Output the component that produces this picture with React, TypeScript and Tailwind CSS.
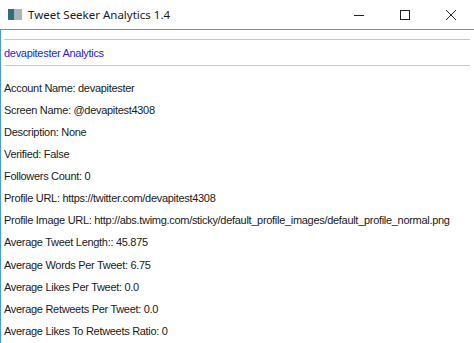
import React from "react";

const rows = [
  "Account Name: devapitester",
  "Screen Name: @devapitest4308",
  "Description: None",
  "Verified: False",
  "Followers Count: 0",
  "Profile URL: https://twitter.com/devapitest4308",
  "Profile Image URL: http://abs.twimg.com/sticky/default_profile_images/default_profile_normal.png",
  "Average Tweet Length:: 45.875",
  "Average Words Per Tweet: 6.75",
  "Average Likes Per Tweet: 0.0",
  "Average Retweets Per Tweet: 0.0",
  "Average Likes To Retweets Ratio: 0",
];

export default function App() {
  return (
    <div className="w-[474px] h-[343px] bg-white overflow-hidden flex flex-col">
      <div className="h-[29px] flex items-center shrink-0" style={{ fontFamily: '"Noto Sans", sans-serif' }}>
        <div className="ml-[8px] w-[14px] h-[11px] bg-[#a9b4bb] flex">
          <div className="w-[6px] h-full bg-[#2f6f76]" />
        </div>
        <span className="ml-[6px] text-[11.5px] text-[#1a1a1a]">Tweet Seeker Analytics 1.4</span>
        <div className="ml-auto flex items-center h-full">
          <div className="w-[46px] h-full flex items-center justify-center">
            <svg width="10" height="10" viewBox="0 0 10 10"><path d="M0 5.5H10" stroke="#222" strokeWidth="1" /></svg>
          </div>
          <div className="w-[46px] h-full flex items-center justify-center">
            <svg width="10" height="10" viewBox="0 0 10 10"><rect x="0.5" y="0.5" width="9" height="9" fill="none" stroke="#222" strokeWidth="1" /></svg>
          </div>
          <div className="w-[46px] h-full flex items-center justify-center">
            <svg width="10" height="10" viewBox="0 0 10 10"><path d="M0 0L10 10M10 0L0 10" stroke="#222" strokeWidth="1" /></svg>
          </div>
        </div>
      </div>
      <div
        className="flex-1 border-t border-l border-[#4a9bdc] pl-[3px] pr-[4px] pt-[9px]"
        style={{ fontFamily: '"Liberation Sans", Arial, sans-serif' }}
      >
        <div className="h-[1px] bg-[#c8c8c8]" />
        <div className="h-[25px] pt-[2px] flex items-center text-[11px] tracking-[-0.3px] text-[#2626dc]">devapitester Analytics</div>
        <div className="h-[1px] bg-[#c8c8c8]" />
        <div className="flex flex-col pt-[11px]">
          {rows.map((r) => (
            <div key={r} className="h-[22.1px] flex items-center text-[11px] tracking-[-0.3px] text-[#1a1a1a] whitespace-nowrap">
              {r}
            </div>
          ))}
        </div>
      </div>
    </div>
  );
}
